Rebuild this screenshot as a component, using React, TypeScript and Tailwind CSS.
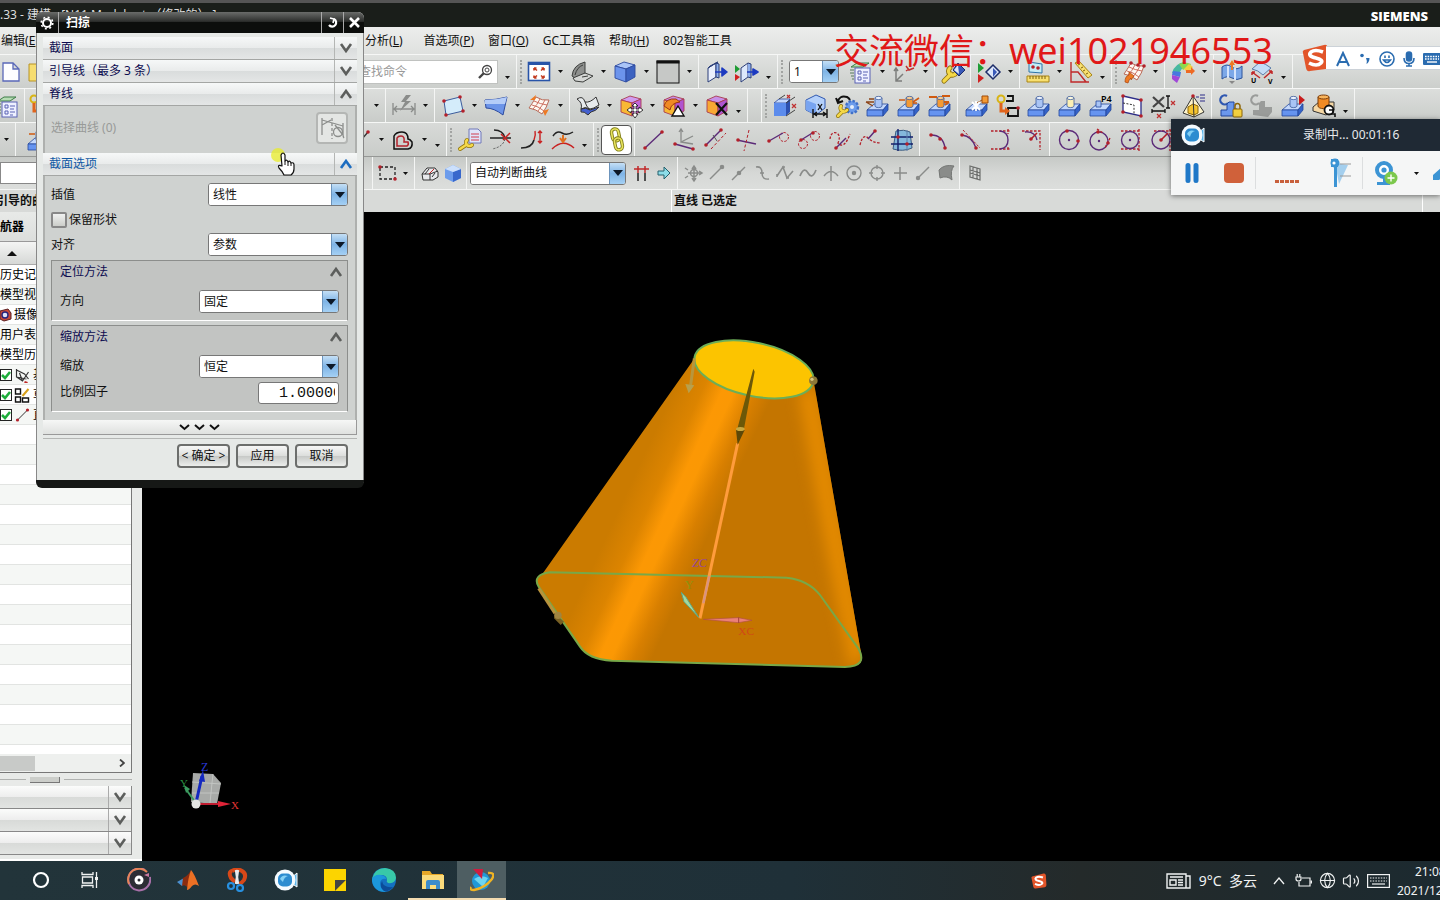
import type { ReactNode } from 'react'
import { Globe, Volume2 } from 'lucide-react'

// ---------- shared drawing pieces ----------

const RED = '#b3202a'
const PURPLE = '#5b2a78'
const GRAY = '#8a8c8a'

const PadBase = () => (
  <g stroke="#23479c" strokeWidth="0.8" strokeLinejoin="round">
    <path d="M1 16 L8 10 H22 L17 16 Z" fill="#c4d8fc" />
    <path d="M1 16 H17 V22 H1 Z" fill="#6694f0" />
    <path d="M17 16 L22 10 V16 L17 22 Z" fill="#3462c8" />
  </g>
)

const Pad = ({ top = '#a9c4f5', lid = '#eef4ff' }: { top?: string; lid?: string }) => (
  <g>
    <PadBase />
    <path d="M9 4 V12 a3.5 1.6 0 0 0 7 0 V4 Z" fill={top} stroke="#3c5c9c" strokeWidth="0.8" />
    <ellipse cx="12.5" cy="4" rx="3.5" ry="1.6" fill={lid} stroke="#3c5c9c" strokeWidth="0.8" />
  </g>
)

const Cube = ({ a = '#a9c4f8', b = '#6c94ec', c = '#3c62c0', s = '#2c4a9e' }: { a?: string; b?: string; c?: string; s?: string }) => (
  <g stroke={s} strokeWidth="0.9" strokeLinejoin="round">
    <path d="M2 6 L11 2 L22 5 L13 9 Z" fill={a} />
    <path d="M2 6 L13 9 V22 L2 18 Z" fill={b} />
    <path d="M13 9 L22 5 V17 L13 22 Z" fill={c} />
  </g>
)

const Wrench = () => (
  <g fill="none" strokeLinecap="round">
    <path d="M3 21 L10 14 M9 8 A4 4 0 1 0 15 13" stroke="#8d7210" strokeWidth="5" />
    <path d="M3 21 L10 14 M9 8 A4 4 0 1 0 15 13" stroke="#f4d848" strokeWidth="3.2" />
  </g>
)

const Dot = ({ x, y }: { x: number; y: number }) => <circle cx={x} cy={y} r="1.8" fill={RED} />

const Sheet = () => (
  <g>
    <path d="M2 7 L8 3 H20 L14 7 Z" fill="#b6dcb4" stroke="#3c7c46" />
    <rect x="6" y="8" width="15" height="15" fill="#eef0ff" stroke="#5b62b4" />
    <path d="M9 11 h3 v3 h-3 Z M9 17 h3 v3 h-3 Z M14 12 h5 M14 15 h4 M14 18 h5 M14 21 h3" fill="none" stroke="#5b62b4" />
    <path d="M1 10 H5 M1 13 H5 M2 16 H5 M3 19 H5" stroke="#567a5c" />
  </g>
)

const Mesh = () => (
  <g>
    <path d="M2 14 Q5 10 9 3 Q15 7 22 6 Q20 13 15 20 Q9 15 2 14 Z" fill="#fdf8f2" stroke="#b86a58" />
    <path d="M5 11 Q11 12 17 17 M7 7 Q13 10 20 11 M6 15 Q10 11 13 5 M11 17 Q15 12 18 6" fill="none" stroke="#cc7060" />
  </g>
)

const icons: Record<string, ReactNode> = {
  doc: <path d="M3 3 H13 L19 9 V21 H3 Z M13 3 V9 H19" fill="#fdfdff" stroke="#5a68b8" strokeWidth="1.3" />,
  folder: <path d="M1 4 H9 L11 7 H20 V21 H1 Z" fill="#f6dd70" stroke="#b89424" />,
  fit: (
    <g>
      <rect x="1.5" y="2.5" width="21" height="18" fill="#fff" stroke="#2854a8" strokeWidth="1.6" />
      <path d="M1 3 H23 V5 H1 Z" fill="#2854a8" />
      <path d="M7 8 l3 2.5 M7 8 h2.5 M7 8 v2.5 M17 8 l-3 2.5 M17 8 h-2.5 M17 8 v2.5 M7 18 l3-2.5 M7 18 h2.5 M7 18 v-2.5 M17 18 l-3-2.5 M17 18 h-2.5 M17 18 v-2.5" stroke="#c23b20" strokeWidth="1.6" />
    </g>
  ),
  plate: (
    <g stroke="#3c3e3c" strokeLinejoin="round">
      <path d="M2 16 Q3 5 15 2 V14 L5 18 Z" fill="#8e908e" />
      <path d="M3 18 L15 13 L23 16 L13 22 L5 21 Z" fill="#d4d6d4" />
      <path d="M5 15 Q7 7 13 5 M12 17 L18 16" fill="none" />
    </g>
  ),
  cube: <Cube />,
  square: (
    <g>
      <rect x="1" y="1" width="22" height="22" fill="#c6c8c6" stroke="#111" />
      <path d="M0.5 2 H23.5" stroke="#111" strokeWidth="3" />
    </g>
  ),
  extrude: (
    <g strokeLinejoin="round">
      <path d="M3 8 L11 3 V17 L3 22 Z" fill="#e9effc" stroke="#2c3e78" />
      <path d="M3 8 L5 6 L13 2 L11 3 Z M11 3 L14 4 V18 L11 17 Z" fill="#8fb0ec" stroke="#2c3e78" />
      <path d="M10 12 H18 M17 8 L22 12 L17 16 Z" stroke="#1c3ac0" strokeWidth="1.6" fill="#1c3ac0" />
    </g>
  ),
  extrudeIn: (
    <g strokeLinejoin="round">
      <path d="M6 8 L13 3 V17 L6 22 Z" fill="#dde8fb" stroke="#2c3e78" />
      <path d="M13 3 L16 4 V18 L13 17" fill="#8fb0ec" stroke="#2c3e78" />
      <path d="M0 5 L5 9 L0 13 Z" fill="#1f9c34" />
      <path d="M0 14 L5 17 L0 21 Z" fill="#d02020" />
      <path d="M12 12 H19 M18 9 L23 12 L18 15 Z" stroke="#1c3ac0" strokeWidth="1.6" fill="#1c3ac0" />
    </g>
  ),
  sheet: <Sheet />,
  axes: (
    <g fill="none">
      <path d="M4 9 V21 H10 M4 21 L11 14 M2 11 L4 8 L6 11" stroke="#7c7e7c" strokeWidth="1.5" />
      <path d="M14 6 L17 10 L22 8 M14 11 L17 9" stroke="#c03030" strokeWidth="1.5" />
    </g>
  ),
  wrenchDiamond: (
    <g>
      <Wrench />
      <path d="M17 3 L24 10 L18 16 L12 10 Z" fill="#3858b8" stroke="#1c2c68" />
      <path d="M17 5 L18 14 L13 10 Z" fill="#dce6fa" />
    </g>
  ),
  playDiamond: (
    <g>
      <path d="M1 3 L7 8 L1 13 Z" fill="#1f9c34" />
      <path d="M1 14 L7 18 L1 23 Z" fill="#d02020" />
      <path d="M16 5 L23 12 L16 19 L9 12 Z" fill="#dce6fa" stroke="#1c2c68" strokeWidth="1.5" />
      <path d="M16 8 L20 12 L16 17 Z" fill="#3858b8" />
    </g>
  ),
  ruler: (
    <g>
      <path d="M3 2 L16 4 V13 L3 12 Z" fill="#c4ecf6" stroke="#2c74a8" />
      <Dot x={7} y={7} />
      <Dot x={12} y={8} />
      <path d="M1 16 H23 V22 H1 Z" fill="#f8e070" stroke="#a88414" />
      <path d="M4 16 v3 M7 16 v3 M10 16 v3 M13 16 v3 M16 16 v3 M19 16 v3" stroke="#7c6010" />
    </g>
  ),
  angle: (
    <g fill="none">
      <path d="M2 2 V22 H20 M2 12 H9 L17 22" stroke="#c02828" strokeWidth="1.4" />
      <path d="M6 3 L10 1 L23 15 L19 18 Z" fill="#f8e070" stroke="#a88414" />
      <path d="M9 5 l2-1 M12 8 l2-1 M14 11 l2-1 M17 14 l2-1" stroke="#7c6010" />
    </g>
  ),
  meshUp: (
    <g>
      <Mesh />
      <Dot x={9} y={3} />
      <Dot x={16} y={5} />
      <Dot x={22} y={6} />
      <path d="M3 22 Q3 16 7 15 L7 12 L12 16 L9 20 V18 Q7 19 6 23 Z" fill="#ee7a24" stroke="#a8440c" strokeWidth="0.7" />
    </g>
  ),
  rainbow: (
    <g>
      <path d="M1 13 Q4 3 14 2 L17 5 Q9 8 8 15 Z" fill="#48b8a0" />
      <path d="M8 4 Q14 1 20 4 L18 8 Q14 8 12 10 Z" fill="#8cd850" />
      <path d="M18 4 L22 7 L17 13 L13 9 Z" fill="#f4d040" />
      <path d="M2 11 L10 12 L9 17 L1 15 Z" fill="#4878e0" />
      <path d="M1 15 L9 17 L6 23 L1 19 Z" fill="#a048d8" />
      <path d="M15 10 H20 V7 L24 11 L20 15 V13 H15 Z" fill="#ee6a24" />
    </g>
  ),
  waveUp: (
    <g>
      <path d="M2 7 Q7 3 12 7 T22 6 V18 Q17 21 12 18 T2 19 Z" fill="#7ca8e8" stroke="#2c549c" />
      <path d="M8 6 V18 M15 8 V20" stroke="#d4e4fc" strokeWidth="2" />
      <path d="M12 0 L15 5 H9 Z M11 4 h2 v6 h-2 Z" fill="#ee7a24" />
      <path d="M9 21 H15 L12 24 Z" fill="#888" />
    </g>
  ),
  uv: (
    <g>
      <path d="M2 9 L10 2 Q16 4 21 8 L13 15 Q8 10 2 9 Z" fill="#c4dcf6" stroke="#5c7ca8" />
      <path d="M2 12 L10 18 M22 11 L14 18 M2 12 h3 M2 12 v3 M22 11 h-3 M22 11 v3" stroke="#c02828" strokeWidth="1.5" />
      <text x="1" y="23" fontSize="7" fontWeight="700">U</text>
      <text x="18" y="24" fontSize="7" fontWeight="700">V</text>
    </g>
  ),
  dimGray: (
    <g stroke={GRAY} fill="none" strokeWidth="1.3">
      <path d="M1 9 V21 M23 9 V21 M2 15 H22 M5 12 L2 15 L5 18 M19 12 L22 15 L19 18" />
      <path d="M14 1 L9 8 H13 L8 17 L19 7 H14 L19 1 Z" fill={GRAY} stroke="none" />
    </g>
  ),
  quad: (
    <g>
      <path d="M3 7 L19 3 L22 17 L5 21 Z" fill="#d4ecfa" stroke="#3c5c9c" />
      <Dot x={3} y={7} />
      <Dot x={19} y={3} />
      <Dot x={22} y={17} />
      <Dot x={5} y={21} />
    </g>
  ),
  sweep: (
    <g>
      <path d="M1 6 Q12 6 23 3 L19 21 Q10 14 2 14 Z" fill="#6c94e8" stroke="#2c4a9e" />
      <path d="M1 6 Q12 6 23 3 L21 10 Q12 10 1 10 Z" fill="#b4ccf8" />
    </g>
  ),
  mesh: (
    <g>
      <Mesh />
      <path d="M3 6 L9 1 L8 6 Z M16 17 L22 15 L18 22 Z" fill="#ee7a24" />
    </g>
  ),
  book: (
    <g stroke="#333" strokeLinejoin="round">
      <path d="M1 5 Q7 1 9 8 Q14 9 20 3 L23 11 Q17 15 14 15 Q9 12 5 15 Q7 9 1 5 Z" fill="#e6eaec" />
      <path d="M5 15 Q10 13 14 16 L23 13 Q20 17 15 18 L12 21 Q8 17 5 18 Z" fill="#4460d0" />
      <path d="M9 8 Q10 12 14 16" fill="none" />
    </g>
  ),
  cubeMove: (
    <g>
      <Cube a="#d09cf0" b="#f8b834" c="#c064d8" s="#a83c50" />
      <path d="M16 9 L19 12 H17 V15 H20 V13 L24 16 L20 19 V17 H17 V20 H19 L16 24 L13 20 H15 V17 H12 V19 L8 16 L12 13 V15 H15 V12 H13 Z" fill="#fff" stroke="#111" strokeWidth="0.8" />
    </g>
  ),
  cubeTri: (
    <g>
      <Cube a="#c890e8" b="#f8b834" c="#b054d0" s="#a83c50" />
      <path d="M2 12 Q4 4 14 5 L18 8 Q9 9 8 16 Z" fill="#f08a24" stroke="#9c3414" />
      <path d="M16 12 L22 22 H10 Z" fill="#fff" stroke="#111" strokeWidth="1.4" />
    </g>
  ),
  cubeX: (
    <g>
      <Cube a="#c890e8" b="#f8a834" c="#b054d0" s="#a83c50" />
      <path d="M11 9 L22 21 M22 9 L11 21" stroke="#111" strokeWidth="2.2" />
    </g>
  ),
  boxDash: (
    <g>
      <path d="M1 9 L6 5 H17 L13 9 Z" fill="#c4d8fc" stroke="#2c4a9e" strokeWidth="0.8" />
      <path d="M1 9 H13 V22 H1 Z" fill="#5c8cec" />
      <path d="M13 9 L17 5 V18 L13 22 Z" fill="#2c50b0" />
      <path d="M6 5 L12 1 M13 9 L22 3 M13 22 L22 16" stroke="#444" />
      <path d="M14 1 l3 3 M17 1 l-3 3 M19 10 l4 4 M23 10 l-4 4" stroke="#c03030" strokeWidth="1.2" />
    </g>
  ),
  boxDim: (
    <g>
      <path d="M2 6 L12 1 L21 5 V14 L12 21 L2 16 Z" fill="#b4d0fa" stroke="#3058b0" />
      <path d="M2 6 L12 10 V21 L2 16 Z" fill="#78a4f0" />
      <path d="M9 15 V24 M23 15 V24 M10 20 H22 M13 18 L10 20 L13 22 M19 18 L22 20 L19 22" stroke="#111" strokeWidth="1.4" fill="none" />
      <path d="M14 10 l4 6 M18 10 l-4 6" stroke="#111" strokeWidth="1.3" />
    </g>
  ),
  regen: (
    <g>
      <circle cx="17" cy="13" r="6" fill="#6c9cec" stroke="#4070c8" strokeDasharray="2.5 1.5" strokeWidth="2.4" />
      <circle cx="17" cy="13" r="2" fill="#e4eefc" />
      <path d="M3 8 Q4 1 12 3 Q14 4 15 6 M1 4 L3 9 L8 7" fill="none" stroke="#111" strokeWidth="2" />
      <g fill="none" strokeLinecap="round">
        <path d="M3 22 L8 17 M6 12 A3.5 3.5 0 1 0 12 16" stroke="#8d7210" strokeWidth="4" />
        <path d="M3 22 L8 17 M6 12 A3.5 3.5 0 1 0 12 16" stroke="#f4d848" strokeWidth="2.6" />
      </g>
    </g>
  ),
  pad: <Pad />,
  padLine: (
    <g>
      <Pad />
      <path d="M0 8 H8 M0 8 L7 12 M3 5 H8" stroke="#8c4418" strokeWidth="1.4" fill="none" />
    </g>
  ),
  padOrange: (
    <g>
      <Pad top="#f49a34" lid="#fccc8c" />
      <path d="M2 6 H8 M16 8 L22 4 M16 9 H20" stroke="#d05a10" strokeWidth="1.6" fill="none" />
    </g>
  ),
  padOrange2: (
    <g>
      <Pad top="#f49a34" lid="#fccc8c" />
      <path d="M1 3 H9 M14 2 H22 M16 8 H21 M17 11 L21 8" stroke="#d05a10" strokeWidth="1.8" fill="none" />
    </g>
  ),
  padUp: (
    <g>
      <PadBase />
      <path d="M17 2 h6 v7 h-6 Z" fill="#f49a34" stroke="#a04a08" />
      <path d="M12 9 L17 6" stroke="#a04a08" />
      <path d="M7 8 l8 8 M15 8 l-8 8 M11 7 v10" stroke="#fff" strokeWidth="1.8" />
    </g>
  ),
  flow: (
    <g fill="none" strokeWidth="2">
      <circle cx="5" cy="5" r="3.5" stroke="#d8b414" />
      <path d="M11 2 H17 V7 H10 M12 14 H22 V22 H12 Z" stroke="#111" strokeWidth="1.8" />
      <path d="M5 9 V17 H10" stroke="#e0641c" strokeWidth="3" />
      <path d="M9 13 L14 17 L9 21 Z" fill="#e0641c" stroke="none" />
      <Dot x={22} y={14} />
    </g>
  ),
  padYellow: <Pad top="#fcf0b4" lid="#fffbe0" />,
  padP4: (
    <g>
      <PadBase />
      <path d="M7 7 H12 V13 H7 Z" fill="#a9c4f5" stroke="#23479c" strokeWidth="0.8" />
      <text x="12" y="8" fontSize="9" fontWeight="600">P4</text>
    </g>
  ),
  sketchQuad: (
    <g>
      <path d="M3 2 L21 6 V22 L3 18 Z" fill="#fff" stroke="#2c2c88" strokeWidth="1.3" />
      <path d="M3 9 L14 11 V21" fill="none" stroke="#333" strokeDasharray="2 1.5" />
      <Dot x={3} y={2} />
      <Dot x={21} y={6} />
      <Dot x={21} y={22} />
      <Dot x={3} y={18} />
    </g>
  ),
  xDims: (
    <g>
      <path d="M2 3 L13 13 M13 3 L2 13" stroke="#444" strokeWidth="2.2" />
      <path d="M1 17 H14 M1 15 V19 M14 15 V19 M17 2 V14 M15 2 H19 M15 14 H19" stroke="#111" strokeWidth="1.3" />
      <path d="M6 20 l4 4 M10 20 l-4 4 M20 7 l4 4 M24 7 l-4 4" stroke="#c03030" strokeWidth="1.2" />
    </g>
  ),
  pyramid: (
    <g strokeLinejoin="round">
      <path d="M11 2 L1 19 L12 23 L22 18 Z" fill="#fdf4cc" stroke="#333" />
      <path d="M6 13 L11 10 L16 12 V19 L12 21 L6 19 Z" fill="#f4c430" stroke="#8c6408" />
      <path d="M11 2 L12 23" stroke="#333" />
      <path d="M14 3 h3 M18 1 h5 M18 4 h5 M18 7 h5" stroke="#2c2c88" />
      <Dot x={11} y={2} />
    </g>
  ),
  undoLock: (
    <g>
      <path d="M8 2 A4.5 4.5 0 1 0 9 9" fill="none" stroke="#3058b0" strokeWidth="2.2" />
      <path d="M2 16 H8 V10 L10 8 H15 V15 H18 V22 H2 Z" fill="#6c98ec" stroke="#23479c" />
      <rect x="14" y="15" width="9" height="8" rx="1" fill="#f4d040" stroke="#8c6408" />
      <path d="M16 15 V12 a2.5 2.5 0 0 1 5 0 V15" fill="none" stroke="#8c6408" strokeWidth="1.5" />
    </g>
  ),
  undoGray: (
    <g>
      <path d="M8 2 A4.5 4.5 0 1 0 9 9" fill="none" stroke="#9a9c9a" strokeWidth="2.2" />
      <path d="M3 16 H9 V9 L11 7 H15 V13 H22 V18 L18 23 L3 21 Z" fill="#9a9c9a" />
    </g>
  ),
  padFlag: (
    <g>
      <Pad />
      <path d="M18 1 L24 6 L18 11 Z" fill="#c81c1c" />
    </g>
  ),
  padFind: (
    <g>
      <path d="M1 13 L7 8 H22 V16 L14 21 L1 17 Z" fill="#f6d8a4" stroke="#333" />
      <path d="M6 3 V12 a5 2.4 0 0 0 11 0 V3 Z" fill="#f08a24" stroke="#7c3c08" />
      <ellipse cx="11.5" cy="3" rx="5.5" ry="2" fill="#f8b45c" stroke="#7c3c08" />
      <circle cx="17" cy="16" r="4.5" fill="#fff" stroke="#111" strokeWidth="1.8" />
      <path d="M17 16 h4 M21 15 v4 M19 20 h4 v3" fill="none" stroke="#111" strokeWidth="1.6" />
    </g>
  ),
  lineRed: (
    <g>
      <path d="M8 18 L20 4" stroke="#333" strokeWidth="1.3" />
      <Dot x={20} y={4} />
    </g>
  ),
  offset: (
    <g fill="none" strokeWidth="1.5">
      <path d="M3 8 V21 H17 Q22 20 21 14 Q19 11 17 11 Q17 4 11 4 Q5 4 3 8 Z" stroke="#111" />
      <path d="M6 10 V18 H16 Q18 17 17 14 H13 Q14 8 10 8 Q7 8 6 10 Z" stroke={RED} />
    </g>
  ),
  wrenchDoc: (
    <g>
      <path d="M11 1 H20 L23 4 V15 H11 Z" fill="#dfe4fa" stroke="#7078b8" />
      <path d="M13 6 h8 M13 9 h8 M13 12 h8" stroke="#d03c50" />
      <g fill="none" strokeLinecap="round">
        <path d="M2 21 L8 17 M9 12 A3.5 3.5 0 1 0 14 17" stroke="#8d7210" strokeWidth="4" />
        <path d="M2 21 L8 17 M9 12 A3.5 3.5 0 1 0 14 17" stroke="#f4d848" strokeWidth="2.6" />
      </g>
    </g>
  ),
  trim: (
    <g fill="none">
      <path d="M1 10 H22 M5 2 Q14 2 16 10" stroke="#222" strokeWidth="1.5" />
      <path d="M16 11 Q14 19 3 21" stroke="#555" strokeDasharray="2 1.5" />
      <path d="M12 6 L21 15 M21 5 L14 12" stroke="#c82020" strokeWidth="1.5" />
    </g>
  ),
  extend: (
    <g fill="none">
      <path d="M1 20 Q12 20 14 12" stroke="#222" strokeWidth="1.6" />
      <path d="M14 12 Q16 7 15 3 M20 3 V15 M18 5 L20 3 L22 5 M18 13 L20 15 L22 13" stroke="#c82020" strokeWidth="1.4" />
    </g>
  ),
  length: (
    <g fill="none">
      <path d="M2 8 Q6 2 11 5 T22 4" stroke="#222" strokeWidth="1.5" />
      <path d="M1 21 Q12 10 23 20" stroke="#c82020" strokeWidth="1.5" />
      <path d="M12 7 V14 M9 10 L12 14 L15 10" stroke="#e07020" strokeWidth="2" />
    </g>
  ),
  link: (
    <g fill="none">
      <rect x="7" y="1" width="7" height="12" rx="3.5" stroke="#84801c" strokeWidth="3.4" transform="rotate(-12 10 7)" />
      <rect x="7" y="1" width="7" height="12" rx="3.5" stroke="#e8e45c" strokeWidth="1.6" transform="rotate(-12 10 7)" />
      <rect x="10" y="10" width="7" height="12" rx="3.5" stroke="#84801c" strokeWidth="3.4" transform="rotate(-12 13 16)" />
      <rect x="10" y="10" width="7" height="12" rx="3.5" stroke="#e8e45c" strokeWidth="1.6" transform="rotate(-12 13 16)" />
    </g>
  ),
  line: (
    <g>
      <path d="M3 20 L20 4" stroke={PURPLE} strokeWidth="1.4" />
      <Dot x={3} y={20} />
      <Dot x={20} y={4} />
    </g>
  ),
  lineAxes: (
    <g>
      <path d="M8 2 V14 L20 8 M8 14 L20 16 M6 4 L8 1 L10 4" fill="none" stroke={GRAY} strokeWidth="1.3" />
      <path d="M2 16 L20 21" stroke={PURPLE} strokeWidth="1.4" />
      <Dot x={2} y={16} />
      <Dot x={20} y={21} />
    </g>
  ),
  parallel: (
    <g>
      <path d="M2 17 L17 2" stroke={PURPLE} strokeWidth="1.5" />
      <path d="M7 21 L22 5" stroke={RED} strokeDasharray="3 2" />
      <path d="M9 7 L13 13" stroke="#555" />
      <Dot x={2} y={17} />
      <Dot x={17} y={2} />
    </g>
  ),
  cross: (
    <g>
      <path d="M2 12 L21 16" stroke={PURPLE} strokeWidth="1.4" />
      <path d="M14 2 L9 23" stroke={RED} strokeDasharray="3 2" />
      <Dot x={3} y={12} />
    </g>
  ),
  tangent: (
    <g fill="none">
      <circle cx="18" cy="9" r="4.5" stroke={RED} strokeDasharray="2.5 1.5" />
      <path d="M3 13 L17 5" stroke={PURPLE} strokeWidth="1.4" />
      <Dot x={3} y={13} />
    </g>
  ),
  tangent2: (
    <g fill="none">
      <circle cx="6" cy="16" r="4.5" stroke={RED} strokeDasharray="2.5 1.5" />
      <circle cx="18" cy="8" r="4.5" stroke={RED} strokeDasharray="2.5 1.5" />
      <path d="M4 12 L17 4" stroke={PURPLE} strokeWidth="1.4" />
      <Dot x={4} y={12} />
      <Dot x={16} y={5} />
    </g>
  ),
  curveA: (
    <g fill="none">
      <path d="M2 11 Q3 3 9 5 Q13 8 10 15 Q16 22 22 6" stroke={RED} strokeDasharray="2.5 1.5" strokeWidth="1.3" />
      <path d="M8 20 L18 10" stroke={PURPLE} strokeWidth="1.5" />
      <Dot x={8} y={20} />
    </g>
  ),
  curveB: (
    <g fill="none">
      <path d="M1 17 Q4 5 9 10 T22 15" stroke={RED} strokeDasharray="2.5 1.5" strokeWidth="1.3" />
      <path d="M9 11 L16 3" stroke={PURPLE} strokeWidth="1.5" />
      <Dot x={16} y={3} />
    </g>
  ),
  gridSurf: (
    <g>
      <path d="M6 3 Q14 1 20 4 L22 20 Q13 24 3 21 Z" fill="#84b8dc" stroke="#3c5c80" />
      <path d="M1 9 H23 M1 16 H23 M8 1 V23" stroke="#14206c" strokeWidth="1.4" />
      <path d="M17 2 V23" stroke="#5c7ca8" />
      <Dot x={8} y={9} />
      <Dot x={17} y={16} />
    </g>
  ),
  arc: (
    <g fill="none">
      <path d="M4 7 Q16 7 18 20" stroke={PURPLE} strokeWidth="1.4" />
      <Dot x={4} y={7} />
      <Dot x={13} y={11} />
      <Dot x={18} y={20} />
    </g>
  ),
  arcTan: (
    <g fill="none">
      <path d="M4 7 Q14 8 18 20" stroke={PURPLE} strokeWidth="1.4" />
      <path d="M5 2 L22 20" stroke={RED} strokeDasharray="2.5 1.5" />
      <Dot x={4} y={7} />
      <Dot x={18} y={20} />
    </g>
  ),
  fillet: (
    <g fill="none">
      <path d="M2 3 H21 M2 21 H21 M19 1 V6 M19 19 V23" stroke={RED} strokeDasharray="2.5 1.5" strokeWidth="1.3" />
      <path d="M11 3 Q19 4 19 12 Q19 20 11 21" stroke={PURPLE} strokeWidth="1.4" />
    </g>
  ),
  filletArrow: (
    <g fill="none">
      <path d="M2 3 H20 V22" stroke={RED} strokeDasharray="2.5 1.5" strokeWidth="1.3" />
      <path d="M5 4 Q15 3 17 12" stroke={PURPLE} strokeWidth="1.4" />
      <path d="M10 12 L17 5" stroke={RED} strokeWidth="1.6" />
      <Dot x={11} y={11} />
    </g>
  ),
  circle: (
    <g fill="none">
      <circle cx="12" cy="12" r="9.5" stroke={PURPLE} strokeWidth="1.4" />
      <circle cx="12" cy="12" r="1.2" fill={PURPLE} />
      <Dot x={10} y={3} />
      <Dot x={21} y={13} />
    </g>
  ),
  circleTan: (
    <g fill="none">
      <circle cx="11" cy="13" r="9" stroke={PURPLE} strokeWidth="1.4" />
      <circle cx="11" cy="13" r="1.2" fill={PURPLE} />
      <path d="M9 1 L15 5 M22 10 L17 20" stroke={RED} strokeDasharray="2.5 1.5" strokeWidth="1.3" />
      <Dot x={10} y={4} />
      <Dot x={20} y={15} />
    </g>
  ),
  circleBox: (
    <g fill="none">
      <path d="M2 3 H21 M2 21 H21 M20 1 V23" stroke={RED} strokeDasharray="2.5 1.5" strokeWidth="1.3" />
      <circle cx="11" cy="12" r="8.5" stroke={PURPLE} strokeWidth="1.4" />
      <circle cx="11" cy="12" r="1.2" fill={PURPLE} />
    </g>
  ),
  circleRad: (
    <g fill="none">
      <path d="M4 3 H22 M20 1 V23" stroke={RED} strokeDasharray="2.5 1.5" strokeWidth="1.3" />
      <circle cx="11" cy="12" r="9" stroke={PURPLE} strokeWidth="1.4" />
      <path d="M11 12 L18 5" stroke={RED} strokeWidth="1.6" />
      <Dot x={11} y={12} />
    </g>
  ),
  marquee: (
    <g>
      <rect x="4" y="6" width="15" height="12" fill="none" stroke="#222" strokeDasharray="3 2" strokeWidth="1.3" />
      <Dot x={4} y={6} />
      <Dot x={19} y={18} />
    </g>
  ),
  eraser: (
    <g stroke="#333" strokeLinejoin="round">
      <path d="M4 13 L9 7 H17 L20 11 V16 L15 19 H5 Z" fill="#e8e9ec" />
      <path d="M4 13 H12 L20 10 M12 13 V19 M7 13 L11 8 M14 16 L17 12" fill="none" />
      <path d="M11 13 L16 8" stroke="#c02828" />
    </g>
  ),
  smallCube: (
    <g>
      <path d="M4 8 L12 4 L20 8 V17 L12 21 L4 17 Z" fill="#6c9cec" />
      <path d="M12 11 L20 8 V17 L12 21 Z" fill="#3868cc" />
      <path d="M4 8 L12 4 L20 8 L12 11 Z" fill="#cce0fc" />
    </g>
  ),
  hash: (
    <g strokeWidth="1.5">
      <path d="M5 8 H20" stroke="#c02828" />
      <path d="M9 12 V20 M16 12 V20" stroke="#222" />
      <path d="M9 5 V12 M16 5 V12" stroke="#c02828" />
    </g>
  ),
  arrowR: <path d="M6 10 H12 V6 L18 12 L12 18 V14 H6 Z" fill="#8cdce8" stroke="#24606c" />,
  snapMove: (
    <g stroke={GRAY} fill="none" strokeWidth="1.5">
      <path d="M13 6 V19 M7 12 H20 M11 8 L13 5 L15 8 M11 17 L13 20 L15 17 M18 10 L21 12 L18 14" />
      <circle cx="13" cy="12" r="3.5" />
      <path d="M4 7 l3 2 M4 17 l3-2" />
    </g>
  ),
  g1: <g stroke={GRAY} strokeWidth="1.4"><path d="M6 18 L18 6" /><circle cx="18" cy="6" r="1.6" fill={GRAY} /></g>,
  g2: <g stroke={GRAY} strokeWidth="1.4"><path d="M5 19 L18 6" /><circle cx="12" cy="12" r="1.6" fill={GRAY} /></g>,
  g3: <path d="M6 6 Q12 5 12 12 T19 18 M10 12 h4" fill="none" stroke={GRAY} strokeWidth="1.5" />,
  g4: <path d="M4 15 L10 6 L14 17 L20 10 M9 6 h3 M13 17 h3 M4 13 v3" fill="none" stroke={GRAY} strokeWidth="1.6" />,
  g5: <path d="M4 15 Q8 5 12 12 T20 9" fill="none" stroke={GRAY} strokeWidth="1.7" />,
  g6: <path d="M5 15 Q12 6 19 15 M12 5 V20" fill="none" stroke={GRAY} strokeWidth="1.5" />,
  g7: <g stroke={GRAY} fill="none" strokeWidth="1.4"><circle cx="12" cy="12" r="7" /><circle cx="12" cy="12" r="1.5" fill={GRAY} /></g>,
  g8: <g stroke={GRAY} fill="none" strokeWidth="1.4"><circle cx="12" cy="12" r="6" /><path d="M12 4 v4 M12 16 v4 M4 12 h4 M16 12 h4" /></g>,
  g9: <path d="M12 6 V19 M6 12 H19" stroke={GRAY} strokeWidth="1.5" />,
  g10: <g stroke={GRAY} strokeWidth="1.4"><path d="M7 17 L18 6" /><circle cx="7" cy="17" r="1.5" fill={GRAY} /></g>,
  g11: <path d="M5 9 Q10 3 20 5 Q16 9 18 19 Q13 14 6 17 Z" fill={GRAY} stroke="#747674" />,
  g12: <path d="M7 5 L17 8 V19 L7 16 Z M7 9 L17 12 M7 12 L17 15 M10 6 V17 M14 7 V18" fill="none" stroke="#6c6e6c" strokeWidth="1.2" />,
}

const Svg24 = ({ name }: { name: string }) => (
  <svg width="24" height="24" viewBox="0 0 24 24" className="shrink-0 overflow-visible">
    {icons[name]}
  </svg>
)

const Tri = () => (
  <svg width="5" height="3" viewBox="0 0 5 3" className="shrink-0">
    <path d="M0 0 H5 L2.5 3 Z" fill="#111" />
  </svg>
)

// "v" dropdown arrow, "V" overflow arrow, "|" separator, ":" grip, anything else is an icon
function Strip({ items, size }: { items: string; size: 'sm' | 'md' | 'lg' }) {
  const width = { sm: 'w-[23px]', md: 'w-[30px]', lg: 'w-[31px]' }[size]
  return (
    <div className="flex h-full shrink-0 items-center">
      {items.split(' ').map((it, i) => {
        if (it === 'v' || it === 'V')
          return (
            <button key={i} aria-label="更多" className={`flex w-[13px] shrink-0 justify-center ${it === 'V' ? 'pt-3' : ''}`}>
              <Tri />
            </button>
          )
        if (it === '|')
          return <span key={i} className="mr-[3px] ml-[2px] h-full w-px shrink-0 bg-[#f4f5f4]" />
        if (it === ':')
          return <span key={i} className="mr-px h-6 w-[3px] shrink-0 border-l-2 border-dotted border-[#a2a4a2]" />
        return (
          <button
            key={i}
            aria-label={it}
            className={`flex h-[30px] shrink-0 items-center justify-center ${width} ${it === 'link' ? 'rounded-sm border border-[#555] bg-white' : ''}`}
          >
            <Svg24 name={it} />
          </button>
        )
      })}
    </div>
  )
}

interface ComboProps {
  value: string
  label: string
  id?: string
  className?: string
}

function Combo({ value, label, id, className = '' }: ComboProps) {
  return (
    <div className={`flex h-[23px] shrink-0 overflow-hidden rounded-[3px] border border-[#777] bg-white ${className}`}>
      <select id={id} aria-label={label} className="min-w-0 flex-1 appearance-none bg-white pl-1 text-[12px] leading-4 outline-none">
        <option>{value}</option>
      </select>
      <span className="pointer-events-none flex w-4 shrink-0 items-center justify-center border-l border-[#6c94bc] bg-gradient-to-b from-[#c4dff5] via-[#7fb4e6] to-[#a4d0f4]">
        <svg width="10" height="6" viewBox="0 0 10 6">
          <path d="M0 0 H10 L5 6 Z" fill="#0c1828" />
        </svg>
      </span>
    </div>
  )
}

const Chevron = ({ up = false, color = '#5c5e5c' }: { up?: boolean; color?: string }) => (
  <svg width="14" height="12" viewBox="0 0 14 12">
    <path d={up ? 'M2 10 L7 3 L12 10' : 'M2 2 L7 9 L12 2'} fill="none" stroke={color} strokeWidth="2.6" />
  </svg>
)

// ---------- top bars ----------

const menus = [
  ['首选项', 'P'],
  ['窗口', 'O'],
  ['GC工具箱', ''],
  ['帮助', 'H'],
  ['802智能工具', ''],
]

const MenuItem = ({ text, hot }: { text: string; hot: string }) => (
  <button className="shrink-0 whitespace-nowrap">
    {text}
    {hot && (
      <>
        (<u>{hot}</u>)
      </>
    )}
  </button>
)

function TopBars() {
  return (
    <header className="shrink-0 bg-[#dcdedc] text-[12px] leading-4 text-[#111]">
      <div className="flex h-[27px] items-center justify-between border-t-[3px] border-[#555] bg-[#1a1e1a] pr-3 text-[#ddd]">
        <span className="whitespace-pre">.33 - 建模 - [N11 Model.prt （修改的） ]</span>
        <b className="pt-0.5 font-['Open_Sans','Noto_Sans',sans-serif] text-[13px] font-extrabold text-white">SIEMENS</b>
      </div>
      <nav className="flex h-[27px] items-center gap-[14px] bg-gradient-to-b from-[#ecedec] to-[#dfe1df]">
        <div className="w-[351px] shrink-0 pl-px">
          <MenuItem text="编辑" hot="E" />
        </div>
        <div className="mr-[7px]">
          <MenuItem text="分析" hot="L" />
        </div>
        {menus.map(([text, hot]) => (
          <MenuItem key={text} text={text} hot={hot} />
        ))}
      </nav>

      <div className="flex h-[34px] items-center border-t border-[#f6f7f6] bg-gradient-to-b from-[#e0e2e0] to-[#cccfcc]">
        <div className="flex w-[340px] shrink-0">
          <Svg24 name="doc" />
          <span className="ml-1">
            <Svg24 name="folder" />
          </span>
        </div>
        <div className="flex h-6 w-[158px] shrink-0 items-center border border-[#c0c2c0] bg-white pr-1">
          <input aria-label="查找命令" placeholder="查找命令" className="w-0 flex-1 bg-transparent pl-[18px] text-[12px] outline-none placeholder:text-[#999]" />
          <svg width="16" height="16" viewBox="0 0 16 16" fill="none" stroke="#444">
            <circle cx="10" cy="6" r="4.5" strokeWidth="1.3" />
            <circle cx="10" cy="6" r="2" />
            <path d="M7 9 L2 14" strokeWidth="2.4" />
          </svg>
        </div>
        <span className="w-[3px] shrink-0" />
        <Strip size="md" items="V | : fit v plate v cube v square v | extrude extrudeIn V | :" />
        <Combo value="1" label="图层" className="mr-[7px] ml-1 w-[50px]" />
        <Strip size="md" items="sheet v axes v | wrenchDiamond | playDiamond v | ruler v angle V | : meshUp v | rainbow v | waveUp uv V |" />
      </div>

      <div className="flex h-[34px] items-center border-t border-[#f6f7f6] bg-gradient-to-b from-[#dcdedc] to-[#c9ccc9]">
        <div className="flex h-full w-[370px] shrink-0 items-center">
          <span className="-ml-1 flex">
            <Svg24 name="sheet" />
          </span>
          <span className="mx-1 h-full w-px bg-[#f4f5f4]" />
          <Svg24 name="flow" />
        </div>
        <Strip size="md" items="v | dimGray v | quad v sweep v mesh v | book v cubeMove v cubeTri v cubeX V |" />
        <span className="w-2 shrink-0" />
        <Strip
          size="lg"
          items="| : boxDash boxDim regen padLine padOrange padOrange2 | padUp flow pad padYellow padP4 sketchQuad xDims pyramid | undoLock undoGray padFlag padFind V |"
        />
      </div>

      <div className="flex h-[35px] items-center border-t border-b border-t-[#f6f7f6] border-b-[#969896] bg-gradient-to-b from-[#d8dad8] to-[#c9ccc9]">
        <div className="flex h-full w-[345px] shrink-0 items-center">
          <Strip size="md" items="v |" />
          <span className="ml-2 flex">
            <Svg24 name="padOrange" />
          </span>
        </div>
        <Strip size="md" items="lineRed v offset v" />
        <Strip
          size="lg"
          items="V | : wrenchDoc trim extend length V | : link | line lineAxes parallel cross tangent tangent2 curveA curveB gridSurf | arc arcTan fillet filletArrow | circle circleTan circleBox circleRad circle"
        />
      </div>

      <div className="flex h-8 items-center bg-gradient-to-b from-[#c6c9c6] via-[#d6d8d6] to-[#dcdedc]">
        <div className="w-[370px] shrink-0">
          <input aria-label="过滤器" className="h-[22px] w-[200px] border border-[#888] bg-white" />
        </div>
        <Strip size="sm" items="| marquee v | eraser smallCube |" />
        <Combo value="自动判断曲线" label="曲线规则" className="mr-[3px] w-[156px]" />
        <Strip size="sm" items="hash arrowR | snapMove g1 g2 g3 g4 g5 g6 g7 g8 g9 g10 g11 | g12" />
      </div>

      <div className="flex h-[23px] items-center border-t border-[#f4f5f4] bg-[#d8dad8] font-bold">
        <span className="-ml-1 w-[675px] shrink-0 whitespace-nowrap">引导的曲</span>
        <span className="flex h-full items-center border-l border-white pl-[2px]">直线 已选定</span>
        <span className="mr-[17px] ml-auto h-full w-px bg-white" />
      </div>
    </header>
  )
}

// ---------- navigator ----------

const TreeCheck = ({ label }: { label: string }) => (
  <span className="relative size-3 shrink-0">
    <input type="checkbox" defaultChecked aria-label={label} className="absolute inset-0 size-3 appearance-none border border-[#222] bg-white" />
    <svg width="12" height="12" viewBox="0 0 12 12" className="pointer-events-none absolute inset-0">
      <path d="M2 6 L5 9 L10 3" fill="none" stroke="#1fae3c" strokeWidth="2.6" />
    </svg>
  </span>
)

const treeRows: { text: string; icon?: ReactNode; check?: boolean }[] = [
  { text: '历史记录' },
  { text: '模型视图' },
  {
    text: '摄像',
    icon: (
      <svg width="12" height="14" viewBox="0 0 12 14">
        <path d="M0 3 L8 1 L11 5 V11 L4 13 L0 11 Z" fill="#c84838" stroke="#5c2020" />
        <circle cx="5" cy="7" r="3" fill="#dce2fa" stroke="#24247c" strokeWidth="1.4" />
      </svg>
    ),
  },
  { text: '用户表达' },
  { text: '模型历史' },
  {
    text: '基',
    check: true,
    icon: (
      <svg width="17" height="16" viewBox="0 0 16 16" fill="none" stroke="#333" strokeWidth="1.2">
        <path d="M2 2 V10 L8 14 L14 5 M2 10 L12 12 M2 3 L10 7 L14 12 M5 6 L8 14" />
        <path d="M10 15 l3 1" stroke="#c02828" strokeWidth="2" />
      </svg>
    ),
  },
  {
    text: '草',
    check: true,
    icon: (
      <svg width="17" height="16" viewBox="0 0 16 16" fill="none" stroke="#111" strokeWidth="1.4">
        <path d="M1 2 H6 V7 H1 Z M1 10 H6 V15 H1 Z M8 11 H14 V15 H8 Z" />
        <path d="M8 9 L14 2" stroke="#d8a018" strokeWidth="2" />
      </svg>
    ),
  },
  {
    text: '直',
    check: true,
    icon: (
      <svg width="17" height="16" viewBox="0 0 16 16">
        <path d="M3 13 L13 3" stroke="#333" />
        <circle cx="3" cy="13" r="1.6" fill={RED} />
        <circle cx="13" cy="3" r="1.6" fill={RED} />
      </svg>
    ),
  },
]

function Navigator() {
  return (
    <aside className="flex w-[142px] shrink-0 flex-col border-b-2 border-white bg-[#e8eae8] pr-[10px] text-[12px] leading-4">
      <div className="flex h-[30px] shrink-0 items-center border-b border-[#999] bg-gradient-to-b from-[#e8eae8] to-[#dcdedc] font-bold">航器</div>
      <div className="flex min-h-0 flex-1 flex-col border-r border-b border-[#777] bg-white">
        <div className="flex h-[23px] shrink-0 items-center border-b border-[#aaa] bg-gradient-to-b from-[#f4f5f4] to-[#d6d8d6] pl-[7px]">
          <svg width="10" height="5" viewBox="0 0 10 5">
            <path d="M0 5 H10 L5 0 Z" fill="#111" />
          </svg>
        </div>
        <ul className="min-h-0 flex-1 overflow-hidden">
          {Array.from({ length: 25 }, (_, i) => {
            const row = treeRows[i]
            return (
              <li key={i} className="flex h-5 items-center gap-0.5 overflow-hidden border-b border-[#e2e4e2] whitespace-nowrap even:bg-[#f5f7f5]">
                {row?.check && <TreeCheck label={row.text} />}
                {row?.icon}
                {row?.text}
              </li>
            )
          })}
        </ul>
        <div className="flex h-[18px] shrink-0 items-center justify-between bg-[#eef0ee] pr-[6px]">
          <span className="h-[15px] w-[35px] bg-[#c8cac8]" />
          <svg width="6" height="8" viewBox="0 0 6 8">
            <path d="M1 0.5 L5 4 L1 7.5" fill="none" stroke="#444" strokeWidth="1.8" />
          </svg>
        </div>
      </div>
      <div className="flex h-[13px] shrink-0 items-center gap-1">
        <span className="h-px w-[26px] bg-[#b0b2b0]" />
        <span className="h-[6px] w-[30px] border-r border-b border-[#777] bg-[#ccceca]" />
        <span className="h-px flex-1 bg-[#b0b2b0]" />
      </div>
      <div className="mb-1 shrink-0">
        {['依赖项', '细节', '预览'].map((name) => (
          <button
            key={name}
            aria-label={name}
            className="flex h-[23px] w-full items-center border-r border-b border-[#888] bg-[linear-gradient(#fbfcfb,#ededed_50%,#d8dad8_50%,#e2e4e2)]"
          >
            <span className="h-full flex-1" />
            <span className="flex h-full w-[23px] items-center justify-center border-l border-[#aaa]">
              <Chevron />
            </span>
          </button>
        ))}
      </div>
    </aside>
  )
}

// ---------- graphics window ----------

function LoftModel() {
  const body = 'M527 110 L65 765 Q40 780 56 800 L180 980 Q205 1018 275 1022 L975 1041 Q1030 1040 1025 1010 L882 190 Z'
  return (
    <svg width="360" height="360" viewBox="0 0 1080 1080" className="absolute top-[108px] left-[378px]">
      <defs>
        <linearGradient id="band" gradientUnits="userSpaceOnUse" x1="299" y1="562" x2="551" y2="678">
          <stop offset="0" stopColor="#cb7b00" />
          <stop offset="0.28" stopColor="#dc8400" />
          <stop offset="0.48" stopColor="#fc9804" />
          <stop offset="0.6" stopColor="#fb9804" />
          <stop offset="0.82" stopColor="#d87f00" />
          <stop offset="1" stopColor="#c47500" />
        </linearGradient>
        <clipPath id="bodyClip">
          <path d={body} />
        </clipPath>
        <filter id="soft" x="-50%" y="-20%" width="200%" height="140%">
          <feGaussianBlur stdDeviation="20" />
        </filter>
      </defs>
      <path d={body} fill="url(#band)" />
      <g clipPath="url(#bodyClip)">
        <path d="M835 220 L890 200 L1040 1000 L990 1050 L905 620 Z" fill="#e48a00" filter="url(#soft)" />
      </g>
      <path d="M56 800 Q35 765 90 757 L800 773 Q865 780 900 825 L1015 985 Q1045 1040 975 1041 L275 1022 Q205 1018 180 980 Z" fill="none" stroke="#78a848" strokeWidth="6" />
      <ellipse cx="702" cy="148" rx="182" ry="80" transform="rotate(12 702 148)" fill="#fcc400" stroke="#6cae58" strokeWidth="6" />

      <path d="M523 115 L512 195" stroke="#b8963c" strokeWidth="9" />
      <path d="M496 192 L523 196 L506 220 Z" fill="#b8a04c" />
      <path d="M56 805 L105 880" stroke="#b8923c" strokeWidth="9" />
      <path d="M104 880 L132 905 L122 915 L102 895 Z" fill="#786024" />
      <circle cx="114" cy="886" r="11" fill="#a08440" />
      <circle cx="880" cy="182" r="13" fill="#8c7838" />
      <circle cx="876" cy="178" r="5" fill="#d4c47c" />

      <path d="M653 370 L540 895" stroke="#ff9c3c" strokeWidth="9" />
      <path d="M700 146 L704 155 L672 326 L652 326 Z" fill="#6c5808" />
      <path d="M648 330 L674 330 L653 374 Z" fill="#5c4808" />
      <ellipse cx="661" cy="327" rx="13" ry="6" fill="#c8a840" />

      <path d="M568 768 L550 850" stroke="#d89480" strokeWidth="7" />
      <path d="M536 892 L498 832 L484 817 L492 845 Z" fill="#a4d8a0" stroke="#5ca884" strokeWidth="3" />
      <path d="M550 898 L655 893 L696 901 L655 908 Z" fill="#ec8078" stroke="#b05040" strokeWidth="2" />
      <path d="M656 892 V909" stroke="#a04038" strokeWidth="3" />
      <g fontFamily="'Liberation Serif', serif" fontSize="36">
        <text x="516" y="741" fill="#98489c" fontStyle="italic">ZC</text>
        <text x="495" y="808" fill="#8c9410">Y</text>
      </g>
      <text x="655" y="946" fill="#d04818" fontFamily="'Liberation Serif', serif" fontSize="34">XC</text>
    </svg>
  )
}

const Triad = () => (
  <svg width="70" height="56" viewBox="0 0 70 56" className="absolute top-[544px] left-[34px]" fontFamily="'Liberation Serif', serif">
    <path d="M17 17 L37 18 L45 27 L41 48 L15 46 Z" fill="#a8aaa8" />
    <path d="M16 26 L45 28 M37 18 L36 27 L34 47 M16 37 H43" stroke="#c8cac8" fill="none" strokeWidth="0.8" />
    <path d="M20 47 L9 32" stroke="#3c9c60" strokeWidth="2" />
    <path d="M8 29 L14 33 L10 37 Z" fill="#3c9c60" />
    <path d="M20 47 L26 20" stroke="#1428c0" strokeWidth="3" />
    <path d="M23 25 L27 14 L29 26 Z" fill="#1428c0" />
    <path d="M20 48 H44" stroke="#c01c30" strokeWidth="2" />
    <path d="M42 45 L55 48 L42 51 Z" fill="#e02438" />
    <circle cx="20" cy="48" r="4.5" fill="#e4e6e4" />
    <text x="25" y="15" fontSize="12" fill="#2838d8">Z</text>
    <text x="4" y="31" fontSize="11" fill="#2c9040">Y</text>
    <text x="55" y="53" fontSize="11" fill="#e03434">X</text>
  </svg>
)

// ---------- sweep dialog ----------

function SectionHead({ title, open = false, active = false }: { title: string; open?: boolean; active?: boolean }) {
  return (
    <button className="flex h-[23px] w-full items-center border-b border-[#a4a6a4] bg-[linear-gradient(#f6f8f8,#e9ebeb_50%,#d9dcdc_50%,#e4e6e6)]">
      <span className={`flex-1 pl-[6px] text-left ${active ? 'text-[#0e58a4]' : 'text-[#0c0c50]'}`}>{title}</span>
      <span className="flex h-full w-[23px] items-center justify-center border-l border-[#b4b6b4]">
        <Chevron up={open} color={active ? '#1c6cc0' : '#5c5e5c'} />
      </span>
    </button>
  )
}

function Group({ title, children }: { title: string; children: ReactNode }) {
  return (
    <section className="border border-[#8c8e8c] border-b-white bg-[#c2c4c2] px-2 pb-[7px]">
      <div className="-mr-1 flex h-[21px] items-center justify-between">
        <h3 className="text-[#0c0c50]">{title}</h3>
        <Chevron up />
      </div>
      {children}
    </section>
  )
}

const dialogButton = 'h-6 w-[53px] rounded-[4px] border-2 border-[#6c6e6c] bg-[linear-gradient(#f6f7f6,#dcdedc_50%,#c6c8c6_50%,#eceeec)] whitespace-nowrap'

function SweepDialog() {
  return (
    <div role="dialog" aria-label="扫掠" className="absolute top-3 left-9 w-[328px] overflow-hidden rounded-md border-b-8 border-[#161816] bg-[#e6e9e7] text-[12px] leading-4 text-[#111]">
      <div className="flex h-[21px] items-center bg-[linear-gradient(#6a6c6a,#2c2e2c_45%,#0c0e0c_50%)] text-white">
        <button aria-label="选项" className="flex w-[22px] justify-center">
          <svg width="14" height="14" viewBox="0 0 14 14" fill="none" stroke="#fff">
            <circle cx="7" cy="7" r="4" strokeWidth="2" />
            <circle cx="7" cy="7" r="5.8" strokeWidth="1.6" strokeDasharray="2 2.55" />
          </svg>
        </button>
        <b className="flex h-full flex-1 items-center border-l border-[#aaa] pl-[7px] font-bold">扫掠</b>
        <button aria-label="重置" className="flex h-full w-[22px] items-center justify-center border-l border-[#aaa]">
          <svg width="12" height="12" viewBox="0 0 12 12" fill="none" stroke="#fff" strokeWidth="2.2">
            <path d="M7 2 A4 4 0 1 1 2 8" />
            <path d="M3 1 L7 2 L6 6" strokeWidth="1.6" />
          </svg>
        </button>
        <button aria-label="关闭" className="flex h-full w-[21px] items-center justify-center border-l border-[#aaa]">
          <svg width="11" height="11" viewBox="0 0 11 11">
            <path d="M1 1 L10 10 M10 1 L1 10" stroke="#fff" strokeWidth="2.6" />
          </svg>
        </button>
      </div>

      <div className="border-x border-[#888] px-[6px] pt-1 pb-3">
        <SectionHead title="截面" />
        <SectionHead title="引导线（最多 3 条）" />
        <SectionHead title="脊线" open />
        <div className="flex h-[47px] items-start justify-between border-x-2 border-[#aeb0ae] bg-[#cfd2d0] pt-[6px] pr-[7px] pl-[6px]">
          <span className="pt-2 text-[#989a98]">选择曲线 (0)</span>
          <button aria-label="选择曲线" disabled className="flex size-8 items-center justify-center rounded-[4px] border-2 border-[#b4b6b4] bg-[#e4e6e4]">
            <svg width="26" height="26" viewBox="0 0 26 26" fill="none" stroke="#8c8e8c" strokeWidth="1.3">
              <path d="M3 3 V20 M3 5 L24 11 M3 10 L12 5" />
              <path d="M13 3 V24" strokeDasharray="3 2" />
              <circle cx="19" cy="17" r="4.5" />
              <path d="M24 8 V19 Q24 22 25 23 M16 10 L24 20" />
            </svg>
          </button>
        </div>
        <SectionHead title="截面选项" open active />

        <div className="border-x-2 border-[#aeb0ae] bg-[#cfd2d0] pt-[6px] pr-[7px] pb-2 pl-[6px]">
          <div className="flex h-[25px] items-center justify-between">
            <label htmlFor="interp">插值</label>
            <Combo id="interp" label="插值" value="线性" className="w-[140px]" />
          </div>
          <label className="flex h-[25px] items-center gap-[2px]">
            <input type="checkbox" className="size-4 appearance-none rounded-[2px] border-2 border-[#888] bg-[linear-gradient(#f0f1f0,#ccceca)]" />
            保留形状
          </label>
          <div className="mb-[3px] flex h-[25px] items-center justify-between">
            <label htmlFor="align">对齐</label>
            <Combo id="align" label="对齐" value="参数" className="w-[140px]" />
          </div>
          <Group title="定位方法">
            <div className="flex h-[31px] items-end justify-between">
              <label htmlFor="orient" className="pb-1">方向</label>
              <Combo id="orient" label="方向" value="固定" className="w-[140px]" />
            </div>
          </Group>
          <div className="h-1" />
          <Group title="缩放方法">
            <div className="flex h-[31px] items-end justify-between">
              <label htmlFor="scale" className="pb-1">缩放</label>
              <Combo id="scale" label="缩放" value="恒定" className="w-[140px]" />
            </div>
            <div className="mt-1 flex items-start justify-between">
              <label htmlFor="factor" className="pt-0.5">比例因子</label>
              <input
                id="factor"
                defaultValue="1.00000"
                className="h-[22px] w-[81px] rounded-[3px] border border-[#777] bg-white pr-[3px] pl-5 font-['Liberation_Mono',monospace] text-[15px] outline-none"
              />
            </div>
          </Group>
        </div>

        <div className="flex h-[15px] items-center justify-center gap-1 border-r border-b border-[#999] bg-gradient-to-b from-[#f6f7f6] to-[#dfe1df]">
          {[0, 1, 2].map((i) => (
            <svg key={i} width="11" height="7" viewBox="0 0 11 7">
              <path d="M1 1 L5.5 5 L10 1" fill="none" stroke="#111" strokeWidth="2" />
            </svg>
          ))}
        </div>
        <div className="mt-[3px] flex justify-end gap-[6px] border-t border-[#b4b6b4] pt-[5px] pr-[9px]">
          <button className={dialogButton}>&lt; 确定 &gt;</button>
          <button className={dialogButton}>应用</button>
          <button className={dialogButton}>取消</button>
        </div>
      </div>
    </div>
  )
}

// ---------- floating windows ----------

const CameraLogo = () => (
  <svg width="24" height="24" viewBox="0 0 24 24">
    <path d="M17 10 L23 5 V19 L17 15 Z" fill="#5cb4e8" stroke="#fff" />
    <circle cx="11" cy="12" r="10.5" fill="#f4fafe" />
    <rect x="4" y="5.5" width="14" height="13" rx="5" fill="#2c8cd0" />
    <path d="M6 11 Q8 6 14 8 Q10 9 9 14 Z" fill="#84d0f4" />
  </svg>
)

const SogouLogo = ({ size }: { size: number }) => (
  <svg width={size} height={size} viewBox="0 0 28 28" className="shrink-0">
    <path d="M2 6 L22 1 Q25 0 26 4 L27 21 Q27 24 24 25 L8 27 Q5 28 4 24 L1 9 Q0 7 2 6 Z" fill="#e2552a" />
    <path d="M21 8 Q13 5 9 8 Q5 12 14 14 Q22 16 19 19 Q15 23 7 19" fill="none" stroke="#fff" strokeWidth="3.6" />
  </svg>
)

function Recorder() {
  return (
    <div className="absolute top-[119px] right-0 w-[269px] overflow-hidden bg-[#f5f6f6] text-[12px] shadow-[0_1px_5px_rgba(0,0,0,0.5)]">
      <div className="flex h-8 items-center bg-[#1f2934] pl-[10px] text-[#e8eaec]">
        <CameraLogo />
        <span className="pl-[98px]">录制中... 00:01:16</span>
      </div>
      <div className="flex h-11 items-center">
        <button aria-label="暂停" className="flex w-[42px] shrink-0 justify-center">
          <svg width="16" height="20" viewBox="0 0 16 20">
            <path d="M4 2.5 V17.5 M12 2.5 V17.5" stroke="#1f78c8" strokeWidth="5" strokeLinecap="round" />
          </svg>
        </button>
        <button aria-label="停止" className="flex w-[42px] shrink-0 justify-center">
          <span className="size-5 rounded-[4px] bg-[#d0613a]" />
        </button>
        <span className="h-8 w-px shrink-0 bg-[#dcdedf]" />
        <svg width="62" height="24" viewBox="0 0 62 24" className="shrink-0">
          <path d="M19 20.5 H43" stroke="#c8603c" strokeWidth="3" strokeDasharray="4 1" />
        </svg>
        <button aria-label="标注" className="flex w-[44px] shrink-0 justify-center">
          <svg width="24" height="30" viewBox="0 0 24 30">
            <path d="M7 5 L20 7 L11 26 Z" fill="#a4cfee" />
            <path d="M12 6 H23 M12 18 H23" stroke="#999" />
            <path d="M3 1 H10 V9 H9 V29 H6 V9 H3 Z" fill="#3c94d4" />
            <circle cx="7" cy="5" r="4.5" fill="#3c94d4" />
            <circle cx="6" cy="5" r="1.6" fill="#fff" />
          </svg>
        </button>
        <span className="h-8 w-px shrink-0 bg-[#dcdedf]" />
        <button aria-label="摄像头" className="flex w-[45px] shrink-0 justify-center">
          <svg width="24" height="26" viewBox="0 0 24 26">
            <circle cx="10" cy="10" r="7" fill="#fff" stroke="#3c94d4" strokeWidth="4" />
            <circle cx="10" cy="10" r="2.6" fill="#3c94d4" />
            <path d="M9 18 H12 V22 H16 V25 H3 V22 H9 Z" fill="#3c94d4" />
            <circle cx="17" cy="18" r="6.5" fill="#7cc84c" />
            <path d="M17 14.5 V21.5 M13.5 18 H20.5" stroke="#fff" strokeWidth="1.4" />
          </svg>
        </button>
        <button aria-label="更多" className="flex w-4 shrink-0 justify-center">
          <Tri />
        </button>
        <svg width="16" height="18" viewBox="0 0 16 18" className="ml-2 shrink-0">
          <path d="M1 16 V11 L12 1 L16 5 V10 L7 16 Z" fill="#3c94d4" />
        </svg>
      </div>
    </div>
  )
}

const InputMethodBar = () => (
  <div className="absolute top-11 right-0 flex h-7 w-[138px] items-center">
    <SogouLogo size={28} />
    <div className="-ml-1 flex h-6 flex-1 items-center gap-2 overflow-hidden border-y border-[#ccd2d8] bg-white pt-0.5 pl-[9px] text-[#2a6cb0]">
      <svg width="16" height="16" viewBox="0 0 16 16" className="shrink-0" fill="none" stroke="currentColor" strokeWidth="2">
        <path d="M2 15 L8 2 L14 15 M4 11 H12" />
      </svg>
      <svg width="12" height="12" viewBox="0 0 12 12" className="shrink-0" fill="currentColor">
        <circle cx="3" cy="2.5" r="1.8" />
        <path d="M7 5 h3.5 q0 4-3 6 q1-3-.5-6" />
      </svg>
      <svg width="16" height="16" viewBox="0 0 16 16" className="shrink-0" fill="none" stroke="currentColor" strokeWidth="1.6">
        <circle cx="8" cy="8" r="7" />
        <path d="M4.5 9 Q8 14 11.5 9 Z M6 4.5 V7 M10 4.5 V7" />
      </svg>
      <svg width="12" height="16" viewBox="0 0 12 16" className="shrink-0" fill="none" stroke="currentColor" strokeWidth="1.6">
        <rect x="3.5" y="1" width="5" height="9" rx="2.5" fill="currentColor" />
        <path d="M1 7 Q1 12.5 6 12.5 T11 7 M6 12 V15 M3 15 H9" />
      </svg>
      <svg width="18" height="12" viewBox="0 0 18 12" className="shrink-0">
        <rect width="18" height="12" rx="1" fill="currentColor" />
        <path d="M2 3.5 H16 M2 6 H16" stroke="#fff" strokeDasharray="1.6 1" strokeWidth="1.5" />
        <path d="M4 9 H14" stroke="#fff" strokeWidth="1.4" />
      </svg>
    </div>
  </div>
)

const HandPointer = () => (
  <svg width="30" height="34" viewBox="0 0 30 34" className="pointer-events-none absolute top-[146px] left-[270px]">
    <circle cx="8" cy="9" r="7" fill="#e8ec28" opacity="0.75" />
    <path
      d="M11 9 Q13 5 15 9 V15 Q17 13 18 16 Q20 14 21 17 Q24 16 24 19 V23 Q24 27 21 29 H14 Q13 26 9 22 Q7 18 12 20 Z"
      fill="#fff"
      stroke="#111"
      strokeWidth="1.2"
      strokeLinejoin="round"
    />
    <path d="M15 15 V19 M18 16 V20 M21 17 V20" stroke="#111" />
  </svg>
)

// ---------- taskbar ----------

const apps: { name: string; art: ReactNode; state?: 'open' | 'active' }[] = [
  { name: 'Cortana', art: <circle cx="12" cy="12" r="7" fill="none" stroke="#fff" strokeWidth="2.2" /> },
  {
    name: '任务视图',
    art: (
      <g fill="none" stroke="#f0f2f2" strokeWidth="1.3">
        <path d="M4 4 V6.5 H15 V4 M4 20 V17.5 H15 V20 M4.5 9 H14.5 V15 H4.5 Z M18.5 4 V20" />
        <path d="M17 9 h3 v3 h-3 Z" fill="#f0f2f2" stroke="none" />
      </g>
    ),
  },
  {
    name: '音乐',
    art: (
      <g fill="none">
        <circle cx="12" cy="12" r="9.5" fill="#2c2c34" />
        <path d="M18 2 A11 11 0 1 0 23 9" stroke="#a870a8" strokeWidth="2" />
        <path d="M20 4 A11 11 0 0 0 2 16" stroke="#e88458" strokeWidth="2" />
        <circle cx="12" cy="12" r="4.5" fill="#fff" />
        <circle cx="12" cy="12" r="1.5" fill="#2c2c34" />
        <path d="M17 7 L22 5 V9" fill="#c878a0" />
      </g>
    ),
  },
  {
    name: 'MATLAB',
    art: (
      <g>
        <path d="M1 14 L8 10 L11 13 L6 18 Z" fill="#4c90d0" />
        <path d="M7 10 Q12 8 15 2 L12 20 Q9 16 6 18 Z" fill="#8c2c10" />
        <path d="M15 2 Q18 5 23 18 Q19 15 16 18 Q13 22 11 22 Q12 10 15 2 Z" fill="#ec7024" />
      </g>
    ),
  },
  {
    name: '截图',
    art: (
      <g fill="none">
        <path d="M7 3 Q3 4 6 10 L10 14 M7 3 Q12 0 17 3 Q22 6 19 12 Q17 15 14 16" stroke="#d84818" strokeWidth="4" />
        <path d="M11 2 L13 16 M13 2 L11 16" stroke="#e8eaec" strokeWidth="2.4" />
        <circle cx="6" cy="18" r="3" stroke="#2890e0" strokeWidth="2.2" />
        <circle cx="15" cy="20" r="3" stroke="#2890e0" strokeWidth="2.2" />
      </g>
    ),
  },
  { name: '录屏', art: null },
  {
    name: '便笺',
    art: (
      <g>
        <path d="M1 1 H23 V12 L12 23 H1 Z" fill="#fcd400" />
        <path d="M12 12 H23 L12 23 Z" fill="#444" />
        <path d="M23 12 V23 H12 Z" fill="#fcd400" />
      </g>
    ),
  },
  {
    name: 'Edge',
    art: (
      <g>
        <circle cx="12" cy="12" r="12" fill="#1470c0" />
        <path d="M0 11 Q3 0 13 0 Q24 1 24 10 Q23 16 16 15 Q14 14 15 12 Q15 7 9 7 Q3 7 0 11 Z" fill="#38c8a8" />
        <path d="M0 11 Q3 6 9 7 Q14 8 14 11 Q9 10 8 15 Q8 21 14 24 Q2 24 0 13 Z" fill="#1c98dc" />
        <path d="M10 13 Q11 20 21 19 Q17 24 12 23 Q7 19 10 13 Z" fill="#0c4c98" />
      </g>
    ),
  },
  {
    name: '文件资源管理器',
    state: 'open',
    art: (
      <g>
        <path d="M1 3 H9 L11 6 H22 V21 H1 Z" fill="#e8a828" />
        <path d="M1 7 H23 V21 H1 Z" fill="#fcdc7c" />
        <path d="M5 21 V14 Q5 12 7 12 H17 Q19 12 19 14 V21 H15 V17 H9 V21 Z" fill="#3c8ccc" />
      </g>
    ),
  },
  {
    name: 'NX',
    state: 'active',
    art: (
      <g>
        <circle cx="11" cy="13" r="9" fill="#2098d8" />
        <path d="M4 11 Q11 6 18 10 L13 19 Z" fill="#6cd4f0" />
        <path d="M18 5 Q26 4 22 11 Q15 20 4 22 Q-1 22 1 19" fill="none" stroke="#f0b424" strokeWidth="2.4" />
        <path d="M3 1 L13 1 L12 11 Z" fill="#d01c40" />
      </g>
    ),
  },
]

function Taskbar() {
  return (
    <footer className="flex h-[39px] shrink-0 items-center overflow-hidden bg-[linear-gradient(90deg,#22343a,#1f3038_55%,#242a2a_75%,#1c2a30)] pl-4 text-[#f0f2f2]">
      {apps.map((app) => (
        <button
          key={app.name}
          aria-label={app.name}
          className={`flex h-full w-[49px] shrink-0 items-center justify-center border-b-2 ${
            app.state ? 'border-[#f4dcb0]' : 'border-transparent'
          } ${app.state === 'active' ? 'bg-[#4e5e62]' : ''}`}
        >
          {app.art ? (
            <svg width="24" height="24" viewBox="0 0 24 24">
              {app.art}
            </svg>
          ) : (
            <CameraLogo />
          )}
        </button>
      ))}
      <div className="ml-auto flex h-full shrink-0 items-center">
        <SogouLogo size={16} />
        <button className="ml-[119px] flex items-center gap-2 text-[14px] leading-5">
          <svg width="25" height="16" viewBox="0 0 25 16" fill="none" stroke="currentColor" strokeWidth="1.4">
            <path d="M1 1 H20 V15 H1 Z M20 3 H24 V15 H20 M4 4 H17 M4 7 H10 V12 H4 Z M12 7 H17 M12 9.5 H17 M12 12 H17" />
          </svg>
          <span className="whitespace-pre">9°C  多云</span>
        </button>
        <svg width="12" height="8" viewBox="0 0 12 8" className="ml-4" fill="none" stroke="currentColor" strokeWidth="1.3">
          <path d="M1 7 L6 1 L11 7" />
        </svg>
        <svg width="17" height="14" viewBox="0 0 17 14" className="ml-[10px]" fill="none" stroke="currentColor" strokeWidth="1.2">
          <path d="M7 4 H15 V12 H4 V8 M16.4 6.5 V9.5 M1 3 H6 V5 Q6 7 3.5 7 T1 5 Z M2.2 0 V3 M4.8 0 V3" />
        </svg>
        <Globe size={17} strokeWidth={1.6} className="ml-[7px]" />
        <Volume2 size={18} strokeWidth={1.6} className="ml-[6px]" />
        <svg width="23" height="14" viewBox="0 0 23 14" className="ml-[7px]" fill="none" stroke="currentColor" strokeWidth="1.2">
          <rect x="0.6" y="0.6" width="21.8" height="12.8" />
          <path d="M3 4 H20 M3 7 H20" strokeDasharray="1.5 1.2" />
          <path d="M5 10 H18" />
        </svg>
        <div className="ml-[7px] w-[43px] overflow-hidden text-[12px] leading-[19px] whitespace-nowrap">
          <div className="pl-[18px]">21:08</div>
          <div>2021/12/</div>
        </div>
      </div>
    </footer>
  )
}

export default function App() {
  return (
    <div className="relative flex h-screen flex-col overflow-hidden bg-black font-['Noto_Sans','Noto_Sans_CJK_SC',sans-serif]">
      <TopBars />
      <div className="flex min-h-0 flex-1">
        <Navigator />
        <main className="relative flex-1 overflow-hidden bg-black">
          <LoftModel />
          <Triad />
        </main>
      </div>
      <Taskbar />

      <SweepDialog />
      <HandPointer />
      <p className="pointer-events-none absolute top-[26px] left-[834px] flex items-baseline leading-[50px] whitespace-nowrap text-[#e01818]">
        <span className="text-[35px]">交流微信：</span>
        <span className="text-[36px]">wei1021946553</span>
      </p>
      <InputMethodBar />
      <Recorder />
    </div>
  )
}
